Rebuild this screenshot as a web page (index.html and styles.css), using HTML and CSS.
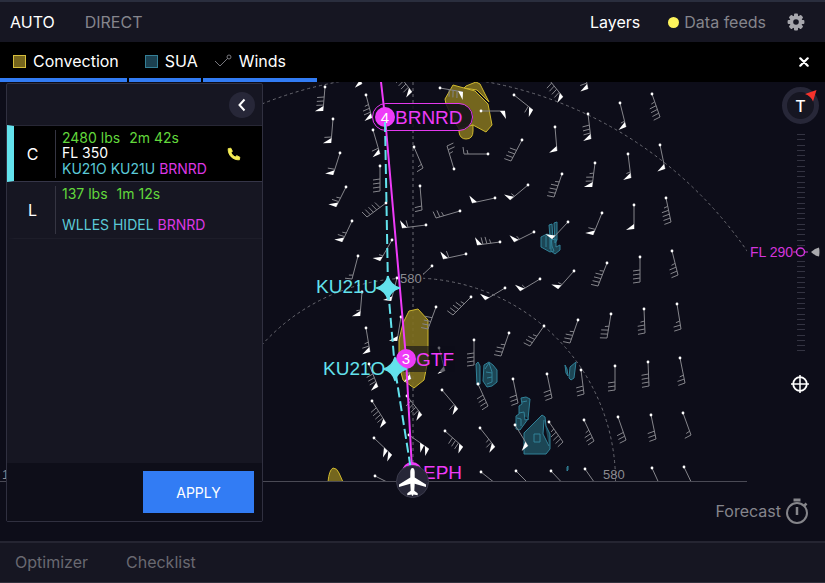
FILE: index.html
```
<!DOCTYPE html>
<html lang="en">
<head>
<meta charset="utf-8">
<title>Route Optimizer</title>
<meta name="viewport" content="width=device-width, initial-scale=1">
<link rel="stylesheet" href="styles.css">
</head>
<body>
<header class="topbar">
  <nav class="modes">
    <button class="link on" type="button">AUTO</button>
    <button class="link" type="button">DIRECT</button>
  </nav>
  <div class="tools">
    <button class="link on" type="button">Layers</button>
    <button class="link feeds" type="button"><span class="dot"></span>Data feeds</button>
    <button class="icon-btn" type="button" aria-label="Settings">
      <svg width="18" height="18" viewBox="-9 -9 18 18">
        <g fill="#a6a6ac">
          <g id="teeth"><rect x="-2" y="-8.4" width="4" height="16.8" rx="1"/><rect x="-8.4" y="-2" width="16.8" height="4" rx="1"/></g>
          <use href="#teeth" transform="rotate(45)"/>
        </g>
        <circle r="4.6" fill="none" stroke="#a6a6ac" stroke-width="3.6"/>
        <circle r="2.8" fill="#161622"/>
      </svg>
    </button>
  </div>
</header>

<div class="layers">
  <button class="layer conv" type="button"><span class="swatch gold"></span>Convection</button>
  <button class="layer sua" type="button"><span class="swatch teal"></span>SUA</button>
  <button class="layer winds" type="button">
    <svg width="18" height="14" viewBox="0 0 18 14" fill="none" stroke="#77777d" stroke-width="1"><path d="M1 7l5 5 8-8"/><circle cx="15" cy="3" r="2"/></svg>Winds</button>
  <button class="icon-btn close" type="button" aria-label="Close layers">
    <svg width="10" height="10" viewBox="0 0 10 10"><path d="M1.3 1.3l7.4 7.4M8.7 1.3L1.3 8.7" stroke="#fff" stroke-width="2.2" stroke-linecap="round"/></svg>
  </button>
</div>

<main class="stage">
  <svg class="map" viewBox="0 82 825 460" preserveAspectRatio="xMinYMin slice" role="img" aria-label="Route map">
    <defs><clipPath id="area"><rect x="0" y="82" width="747" height="399"/></clipPath></defs>
    <g clip-path="url(#area)">
      <g class="range">
        <circle cx="412.5" cy="481" r="203"/>
        <circle cx="412.5" cy="481" r="406"/>
        <path d="M413 82V465"/>
      </g>
      <g class="cell">
        <path d="M464 88l2-2 10-4 4 2 7 14 2 4-12-12z"/>
        <path d="M459 124v8q1 7 7 7 7 0 7-8v-7z"/>
        <path d="M453 85l22 6 13 13 4 21-6 7-13-7-14 4-6-10-7-15-1-5z"/>
        <path d="M399 340l4-17 6-12 9-2 10 11v40l-4 20-10 8-11-8-4-15z"/>
        <path d="M328 482q1-12 5-14 4 0 6 5l4 9z"/>
      </g>
      <g class="airspace">
        <path d="M541 237l6-3 4 2 1 10 2 5-4 1-9-5zM549 225l3-1 1 16-3-3zM554 223l3-1v18l-2 3zM551 240l5-1v8l4-2v5l-5 4-4-3zM546 236v11M550 237v12"/>
        <path d="M476 364l2-2 2 4v18l-3 1zM484 365l5-3 4 3 4 5v12l-5 4-5 1-4-6zM485 369l4-6 3 9 0 10-5 2M486 372l6 1M487 378l5-1"/>
        <path d="M565 365l2 4 1 7-2-3zM570 367l6-5-2 16-3 2-2-2z"/>
        <path d="M521 398l5-1 4 2-2 20-8 11-4-1v-13l3-2v-8l3-2zM522 402l5-1M519 413l5-1 1 8 4-1M517 418l4 1v7"/>
        <path d="M524 433l18-18 3 2 1 9 4 8v15l-4 5h-22zM544 420l-1 14 6 12M534 434h6v8h-6z"/>
        <path d="M567 467l1-1v4l-1 1z"/>
      </g>
      <g id="barbs"></g>
    </g>
    <path class="horizon" d="M0 481.5H747"/>
    <g class="tick-label">
      <rect x="400" y="271" width="23" height="15"/>
      <text x="400" y="283">580</text>
      <text x="603" y="479">580</text>
      <text x="2" y="479">1</text>
    </g>
    <rect x="404" y="346" width="51" height="26" fill="#0d0d19" opacity=".62"/>
    <rect x="373" y="104" width="100" height="26" rx="13" fill="#0d0d19" fill-opacity=".85"/>
    <path class="route" d="M381 82l4 35 21 241 6 112"/>
    <rect x="372.500" y="103.500" width="100" height="27" rx="13.500" fill="none" stroke="#e339ee"/>
    <g fill="#ee3bf8"><circle cx="385" cy="117" r="10"/><circle cx="406" cy="359" r="10"/><circle cx="412" cy="472" r="10"/></g>
    <g class="num"><text x="385" y="123">4</text><text x="406" y="364">3</text></g>
    <path class="draft" d="M385 122l3 166 7 81 16 101"/>
    <g class="fix magenta"><text x="395" y="124">BRNRD</text><text x="416" y="366">GTF</text><text x="423" y="479">EPH</text></g>
    <g class="fix cyan"><text x="316" y="293">KU21U</text><text x="323" y="375">KU21O</text></g>
    <g fill="#63e2ec">
      <path id="star" d="M388 276.500Q390.500 285.500 399.500 288 390.500 290.500 388 299.500 385.500 290.500 376.500 288 385.500 285.500 388 276.500z" stroke="#63e2ec" stroke-width="1.500" stroke-linejoin="round"/>
      <use href="#star" x="7" y="81"/>
    </g>
    <circle cx="412.500" cy="481.500" r="16" fill="#262637" stroke="#3b3b4c"/>
    <path fill="#fff" d="M412.500 468c1.500 0 2.200 2 2.200 4v5.500l11.300 7v2.500l-11.300-3.200-.4 7 3.400 2.500v2l-4.200-.8-.5 1.200h-1l-.5-1.200-4.200.8v-2l3.400-2.500-.4-7-11.300 3.200v-2.500l11.300-7V472c0-2 .7-4 2.200-4z"/>
  </svg>

  <section class="panel" aria-label="Route options">
    <div class="panel-head">
      <button class="back" type="button" aria-label="Collapse">
        <svg width="8" height="14" viewBox="0 0 8 14"><path d="M6.500 1.500L1.500 7l5 5.500" fill="none" stroke="#fff" stroke-width="2"/></svg>
      </button>
    </div>
    <button class="option selected" type="button">
      <span class="letter">C</span>
      <span class="details">
        <span class="gain"><span>2480 lbs</span><span>2m 42s</span></span>
        <span class="level">FL 350</span>
        <span class="fixes">KU21O KU21U <b>BRNRD</b></span>
      </span>
      <svg class="phone" width="14" height="14" viewBox="0 0 24 24"><path fill="#f6ee55" d="M6.600 2L2 2.800C1.500 14 10 22.500 21.200 22l.8-4.600-5.200-2.600-2.800 2.300C10.800 15.500 8.500 13.200 6.900 10l2.300-2.800z" stroke="#f6ee55" stroke-linejoin="round" stroke-width="1.500"/></svg>
    </button>
    <button class="option" type="button">
      <span class="letter">L</span>
      <span class="details">
        <span class="gain"><span>137 lbs</span><span>1m 12s</span></span>
        <span class="level"></span>
        <span class="fixes">WLLES HIDEL <b>BRNRD</b></span>
      </span>
    </button>
    <div class="panel-foot"><button class="apply" type="button">APPLY</button></div>
  </section>

  <aside class="rail">
    <button class="compass" type="button" aria-label="Track up">T
      <svg class="north" width="12" height="12" viewBox="0 0 12 12"><path d="M0 4L11.500 0 8 11.500Q6 6 0 4z" fill="#f5322b"/></svg>
    </button>
    <div class="altitude">
      <svg class="scale" width="8" height="220"><path id="ticks" stroke="#333341"/></svg>
      <input id="alt" type="range" min="0" max="410" value="290">
      <label class="alt-mark" for="alt">FL 290
        <svg width="28" height="12" viewBox="0 0 28 12"><path d="M0 6h15" stroke="#d435dc" stroke-width="1"/><circle cx="7.500" cy="6" r="4" fill="#0d0d19" stroke="#d435dc" stroke-width="1.500"/><path d="M18 6q4-4 8-4.500 1 4.500 0 9-4-.5-8-4.500z" fill="#a9a9ad"/></svg>
      </label>
    </div>
    <button class="icon-btn center" type="button" aria-label="Center on aircraft">
      <svg width="18" height="18" viewBox="-9 -9 18 18" fill="none" stroke="#fff"><circle r="6.800" stroke-width="1.800"/><path d="M-9 0H9M0-9V9" stroke-width="1.500"/></svg>
    </button>
    <button class="link forecast" type="button">Forecast
      <svg width="24" height="26" viewBox="0 0 24 26" fill="none" stroke="#85858a"><circle cx="12" cy="15" r="10" stroke-width="2"/><path d="M8.500 2h7" stroke-width="3"/><path d="M12 9v8" stroke-width="2.500"/><path d="M19 8l2.500-2.500" stroke-width="2.500"/></svg>
    </button>
  </aside>
</main>

<footer class="bottombar">
  <button class="link" type="button">Optimizer</button>
  <button class="link" type="button">Checklist</button>
</footer>
<script src="winds.js"></script>
</body>
</html>
```
FILE: winds.js
```
// Each entry: station x, y, tail x, y, 50 kt flags, 10 kt bars, 5 kt half bars
const winds = [
  [325,87,323,111,1,3,0],[333,119,331,143,1,1,0],[340,153,333,175,1,1,0],[346,187,336,207,1,1,1],
  [366,95,372,118,1,2,1],[373,130,380,154,1,1,0],[380,166,380,191,0,4,0],[386,203,367,217,0,5,0],
  [414,147,423,168,0,1,1],[420,186,422,210,0,2,0],[354,62,362,84,1,1,0],[396,71,412,92,1,4,0],
  [440,88,463,92,1,3,0],[514,95,533,110,1,1,0],[481,111,505,111,1,0,0],[546,76,563,97,1,4,0],
  [583,64,588,89,1,2,0],[620,103,626,127,1,0,1],[588,114,591,139,1,3,0],[555,127,557,151,1,0,0],
  [522,140,511,161,0,4,0],[488,154,464,154,0,1,1],[454,169,447,146,0,2,1],[595,163,592,187,1,2,1],
  [562,174,554,197,0,4,1],[495,198,472,203,1,0,0],[528,185,510,200,1,0,1],[460,211,436,218,0,2,1],
  [602,213,593,235,1,1,0],[628,154,631,178,1,0,1],[652,94,660,117,0,4,1],[660,145,665,169,1,0,0],
  [634,205,634,229,1,0,0],[666,198,671,222,0,4,1],[672,251,678,275,0,3,1],[640,257,640,282,0,4,0],
  [607,263,598,286,0,4,1],[352,221,342,242,1,1,1],[392,240,380,261,1,0,1],[358,256,352,279,0,1,1],
  [362,292,360,316,1,0,1],[366,328,370,352,1,1,1],[397,278,391,301,1,0,0],[426,225,402,228,1,1,0],
  [432,266,415,282,0,3,1],[436,307,428,329,0,4,0],[401,317,397,341,1,0,0],[466,254,443,259,1,1,0],
  [500,242,477,245,1,2,1],[534,232,514,242,1,0,1],[568,222,552,239,1,0,0],[471,297,453,315,0,4,1],
  [505,288,485,300,1,0,0],[540,279,520,291,1,0,1],[574,271,558,289,1,0,1],[474,340,474,365,0,4,0],
  [509,333,501,356,0,3,1],[544,326,530,346,0,3,1],[578,320,570,343,0,3,1],[611,314,607,338,0,3,1],
  [644,309,645,333,0,3,1],[677,304,681,329,0,2,1],[615,366,615,390,0,3,0],[648,362,649,386,0,4,0],
  [680,358,685,383,0,2,1],[618,417,626,440,0,3,0],[651,415,656,439,0,3,0],[683,413,691,435,0,1,1],
  [652,468,662,490,0,0,0],[684,467,695,490,0,0,0],[369,364,378,387,1,3,0],[372,401,386,423,1,4,0],
  [374,438,392,455,2,0,0],[375,476,397,487,1,0,0],[407,396,422,415,1,4,0],[409,435,429,449,2,0,0],
  [442,390,458,409,1,1,0],[445,431,463,447,1,3,0],[480,428,495,447,1,1,1],[478,384,488,406,0,4,0],
  [513,379,518,403,0,3,0],[547,374,552,398,0,3,0],[581,370,584,394,0,3,0],[515,425,528,446,1,0,0],
  [549,422,563,442,0,4,1],[584,420,594,441,0,3,1],[481,472,500,487,0,3,0],[516,471,534,489,0,0,0],
  [551,471,568,489,0,0,0],[585,469,599,489,0,3,0],[439,348,445,371,1,0,0],[404,355,411,379,1,0,1]
];

function barb([x, y, tx, ty, flags, bars, halves]) {
  const len = Math.hypot(tx - x, ty - y);
  const u = [(tx - x) / len, (ty - y) / len];
  const at = (along, out) =>
    (x + u[0] * along - u[1] * out).toFixed(1) + ' ' + (y + u[1] * along + u[0] * out).toFixed(1);
  let lines = `M${x} ${y}L${tx} ${ty}`;
  let solid = '';
  let pos = len;
  for (let i = 0; i < flags; i++) {
    solid += `M${at(pos, 0)}L${at(pos + 1, 8)}L${at(pos - 5, 0)}Z`;
    pos -= 6;
  }
  for (let i = 0; i < bars; i++, pos -= 4) lines += `M${at(pos, 0)}L${at(pos + 1, 7)}`;
  for (let i = 0; i < halves; i++, pos -= 4) lines += `M${at(pos, 0)}L${at(pos + 1, 4)}`;
  return `<path class="shaft" d="${lines}"/><path class="flag" d="${solid}"/><circle class="station" cx="${x}" cy="${y}" r="1.4"/>`;
}
document.getElementById('barbs').innerHTML = winds.map(barb).join('');

let ticks = '';
for (let i = 0; i < 42; i++) ticks += `M0 ${Math.round(i * 5.28) + 0.5}h8`;
document.getElementById('ticks').setAttribute('d', ticks);
```
FILE: styles.css
```
* { box-sizing: border-box; }
body {
  margin: 0;
  min-height: 100vh;
  display: flex;
  flex-direction: column;
  background: #0d0d19;
  color: #fff;
  font-family: Inter, "Liberation Sans", sans-serif;
  font-size: 16px;
}
button {
  margin: 0;
  padding: 0;
  border: 0;
  background: none;
  color: inherit;
  font: inherit;
  text-align: left;
}
svg { display: block; }

.topbar {
  display: flex;
  justify-content: space-between;
  height: 42px;
  padding: 0 20px 0 10px;
  border-top: 2px solid #2a2e3e;
  background: #161622;
}
.modes, .tools { display: flex; align-items: center; gap: 30px; }
.tools { gap: 28px; }
.link { color: #85858c; }
.link.on { color: #fff; }
.feeds { display: flex; align-items: center; gap: 5px; }
.dot { width: 11px; height: 11px; border-radius: 50%; background: #fdf45c; }
.tools .icon-btn { margin-left: -7px; }

.layers {
  display: flex;
  gap: 2px;
  height: 40px;
  padding-right: 16px;
  background: #000;
}
.layer {
  display: flex;
  align-items: center;
  gap: 7px;
  padding-top: 2px;
  border-bottom: 4px solid #327cf4;
}
.conv { padding-left: 13px; padding-right: 8px; }
.sua { padding-left: 16px; padding-right: 3px; }
.winds { padding-left: 11px; padding-right: 31px; }
.swatch { width: 13px; height: 13px; border: 1px solid; }
.gold { background: #75651d; border-color: #d5bd3b; }
.teal { background: #1b4050; border-color: #347f96; }
.close { margin-left: auto; }

.stage {
  position: relative;
  flex: 1;
  display: flex;
  justify-content: space-between;
  padding: 1px 0 19px 6px;
}
.map { position: absolute; inset: 0; width: 100%; height: 100%; }
.range { fill: none; stroke: #6a6a72; stroke-width: 1; stroke-dasharray: 3 3; }
.cell { fill: #80701f; fill-opacity: .9; stroke: #d0b92e; }
.airspace { fill: #1c4655; stroke: #318198; }
.shaft { fill: none; stroke: #85858b; stroke-width: 1; }
.flag, .station { fill: #fff; }
.horizon { stroke: #4a4a55; }
.tick-label { fill: #8b8b91; font: 13px "Liberation Sans", sans-serif; }
.tick-label rect { fill: #0d0d19; }
.route { fill: none; stroke: #ee3bf8; stroke-width: 2; }
.draft { fill: none; stroke: #63e2ec; stroke-width: 2; stroke-dasharray: 10 4; }
.fix { font: 19px "Liberation Sans", sans-serif; }
.magenta { fill: #ee3bf8; }
.cyan { fill: #63e2ec; }
.num { fill: #fff; font: 15px "Liberation Sans", sans-serif; text-anchor: middle; }

.panel {
  position: relative;
  display: flex;
  flex-direction: column;
  width: 257px;
  border: 1px solid #303040;
  border-radius: 2px;
  background: #161622;
  font-size: 14px;
}
.panel-head {
  display: flex;
  justify-content: flex-end;
  align-items: center;
  height: 41px;
  padding-right: 7px;
}
.back {
  display: grid;
  place-items: center;
  width: 26px;
  height: 26px;
  border-radius: 50%;
  background: #272738;
}
.option {
  display: flex;
  align-items: center;
  height: 57px;
  padding: 4px 21px 4px 0;
  border-bottom: 1px solid #1d1d29;
  border-left: 7px solid transparent;
}
.option.selected {
  background: #000;
  border-left-color: #63e2ec;
  border-top: 1px solid #272735;
  border-bottom-color: #353548;
}
.letter { width: 41px; padding-right: 4px; text-align: center; font-size: 16px; }
.details {
  flex: 1;
  display: flex;
  flex-direction: column;
  height: 48px;
  padding-left: 6px;
  border-left: 1px solid #353542;
}
.gain { display: flex; gap: 9px; color: #62d83c; line-height: 15px; }
.level { height: 15px; line-height: 15px; }
.fixes { margin-top: auto; color: #5bc9d7; line-height: 18px; }
.fixes b { color: #dd37e4; font-weight: 400; }
.panel-foot {
  display: flex;
  justify-content: flex-end;
  margin-top: auto;
  padding: 8px;
  background: #0e0e19;
}
.apply { width: 111px; height: 42px; background: #327cf4; text-align: center; }

.rail {
  position: relative;
  display: flex;
  flex-direction: column;
  align-items: flex-end;
  padding: 4px 6px 0 0;
}
.compass {
  position: relative;
  width: 37px;
  height: 37px;
  border: 5px solid #272738;
  border-radius: 50%;
  background: #161622;
  text-align: center;
  font-weight: 500;
}
.north { position: absolute; top: -2px; right: -3px; }
.altitude { position: relative; width: 37px; height: 220px; margin-top: 10px; }
.scale { margin-left: 15px; }
.altitude input {
  position: absolute;
  inset: 0;
  width: 100%;
  height: 100%;
  margin: 0;
  opacity: 0;
  writing-mode: vertical-lr;
  direction: rtl;
}
.alt-mark {
  position: absolute;
  top: 110px;
  right: -2px;
  display: flex;
  align-items: center;
  color: #d435dc;
  font: 14px "Liberation Sans", sans-serif;
  line-height: 16px;
  white-space: nowrap;
}
.center { margin: 21px 10px 0 0; }
.forecast { display: flex; align-items: center; gap: 4px; margin: auto 10px -2px 0; }

.bottombar {
  display: flex;
  align-items: center;
  gap: 38px;
  height: 42px;
  padding: 0 0 2px 15px;
  border-top: 2px solid #252532;
  border-bottom: 1px solid #30303c;
  background: #161622;
}
.bottombar .link { color: #696971; }
```
